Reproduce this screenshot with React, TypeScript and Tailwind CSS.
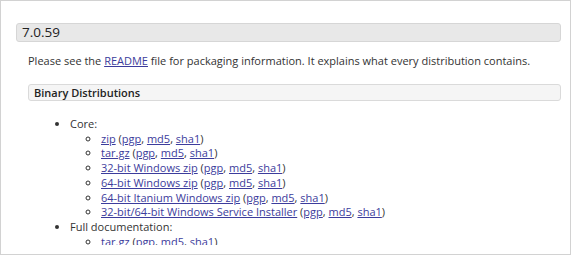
import React from "react";

const Link = ({ children }: { children: React.ReactNode }) => (
  <a href="#" className="text-[#3c3c9c] underline underline-offset-[1px]">
    {children}
  </a>
);

const Sigs = () => (
  <>
    {" "}(<Link>pgp</Link>, <Link>md5</Link>, <Link>sha1</Link>)
  </>
);

const coreFiles = [
  "zip",
  "tar.gz",
  "32-bit Windows zip",
  "64-bit Windows zip",
  "64-bit Itanium Windows zip",
  "32-bit/64-bit Windows Service Installer",
];

const App = () => {
  return (
    <div
      className="w-[571px] h-[255px] overflow-hidden border border-[#d2d2d2] bg-white text-[#333]"
      style={{ fontFamily: '"Open Sans", "Liberation Sans", sans-serif' }}
    >
      {/* clipped content, like a scrolled frame */}
      <div className="h-[244px] overflow-hidden pt-[22px]">
        {/* Version header */}
        <div className="ml-[15px] mr-[9px] h-[19px] rounded-[3px] border border-[#d6d6d6] bg-[#e8e8e8] pl-[5px] text-[13.5px] leading-[17px] text-[#222]">
          7.0.59
        </div>

        <div className="ml-[27px] mr-[9px]">
          <p className="mt-[12px] text-[11px] leading-[14px]">
            Please see the <Link>README</Link> file for packaging information.
            It explains what every distribution contains.
          </p>

          {/* Sub header */}
          <div className="mt-[16px] h-[17px] rounded-[3px] border border-[#dadada] bg-[#f5f5f5] pl-[5px] text-[11px] leading-[15px] font-semibold text-[#222]">
            Binary Distributions
          </div>

          <ul className="mt-[16px] ml-[42px] list-disc text-[11px] leading-[14.7px]">
            <li>
              Core:
              <ul className="ml-[31px] list-[circle]">
                {coreFiles.map((f) => (
                  <li key={f}>
                    <Link>{f}</Link>
                    <Sigs />
                  </li>
                ))}
              </ul>
            </li>
            <li>
              Full documentation:
              <ul className="ml-[31px] list-[circle]">
                <li>
                  <Link>tar.gz</Link>
                  <Sigs />
                </li>
              </ul>
            </li>
          </ul>
        </div>
      </div>
    </div>
  );
};

export default App;
